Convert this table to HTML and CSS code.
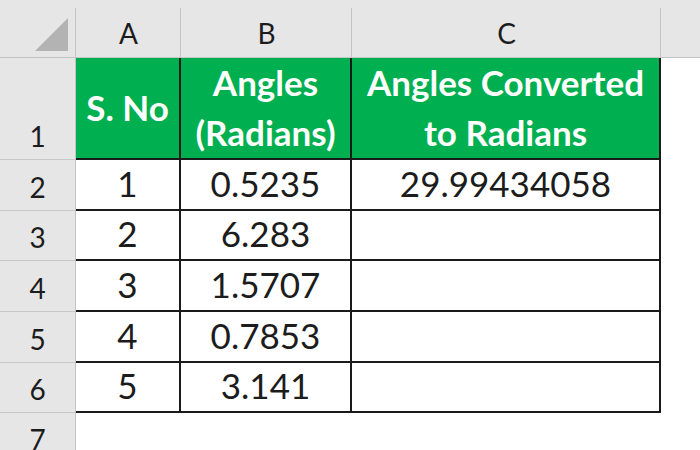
FILE: index.html
```html
<!DOCTYPE html>
<html>
<head>
<meta charset="utf-8">
<link rel="stylesheet" href="styles.css">
</head>
<body>
<div class="sheet">
  <div class="ch corner"><svg class="tri" width="34" height="34" viewBox="0 0 34 34"><polygon points="0,33 33,0 33,33" fill="#b3b3b3"/></svg></div>
  <div class="ch">A</div>
  <div class="ch">B</div>
  <div class="ch">C</div>
  <div class="ch last"></div>

  <div class="rh r1">1</div>
  <div class="hd">S. No</div>
  <div class="hd">Angles<br>(Radians)</div>
  <div class="hd">Angles Converted<br>to Radians</div>
  <div class="blank"></div>

  <div class="rh">2</div>
  <div class="cell">1</div>
  <div class="cell">0.5235</div>
  <div class="cell">29.99434058</div>
  <div class="blank"></div>

  <div class="rh">3</div>
  <div class="cell">2</div>
  <div class="cell">6.283</div>
  <div class="cell"></div>
  <div class="blank"></div>

  <div class="rh">4</div>
  <div class="cell">3</div>
  <div class="cell">1.5707</div>
  <div class="cell"></div>
  <div class="blank"></div>

  <div class="rh">5</div>
  <div class="cell">4</div>
  <div class="cell">0.7853</div>
  <div class="cell"></div>
  <div class="blank"></div>

  <div class="rh">6</div>
  <div class="cell">5</div>
  <div class="cell">3.141</div>
  <div class="cell"></div>
  <div class="blank"></div>

  <div class="rh">7</div>
  <div class="blank"></div>
  <div class="blank"></div>
  <div class="blank"></div>
  <div class="blank"></div>
</div>
</body>
</html>
```
FILE: styles.css
```css
html, body {
  margin: 0;
  padding: 0;
  background: #ffffff;
}
body {
  width: 700px;
  height: 450px;
  overflow: hidden;
  font-family: Lato, "Open Sans", sans-serif;
  color: #1c1c1c;
}
.sheet {
  display: grid;
  grid-template-columns: 76px 105px 171px 309px 1fr;
  grid-template-rows: 58px 102px 51px 50px 51px 51px 50px 50px;
  width: 700px;
}
.ch {
  background-color: #e6e6e6;
  background-image: linear-gradient(#c4c4c4, #c4c4c4), linear-gradient(#c4c4c4, #c4c4c4);
  background-size: 1px 50px, 100% 1px;
  background-position: right bottom, left bottom;
  background-repeat: no-repeat;
  display: flex;
  align-items: center;
  justify-content: center;
  padding-top: 8px;
  box-sizing: border-box;
  font-size: 28px;
  line-height: 1;
}
.ch.last {
  background-image: linear-gradient(#c4c4c4, #c4c4c4);
  background-size: 100% 1px;
  background-position: left bottom;
}
.corner {
  justify-content: flex-start;
  align-items: flex-start;
  padding: 18px 0 0 35px;
}
.tri {
  display: block;
}
.rh {
  background-color: #e6e6e6;
  border-right: 1px solid #c4c4c4;
  border-bottom: 1px solid #c8c8c8;
  box-sizing: border-box;
  display: flex;
  align-items: flex-end;
  justify-content: center;
  padding-bottom: 9px;
  font-size: 28px;
  line-height: 1;
}
.hd {
  background: #00b050;
  color: #ffffff;
  font-weight: 700;
  font-size: 35px;
  line-height: 50px;
  text-align: center;
  display: flex;
  align-items: center;
  justify-content: center;
  padding-bottom: 2px;
  border-right: 2px solid #1a1a1a;
  border-bottom: 2px solid #1a1a1a;
  box-sizing: border-box;
}
.cell {
  display: flex;
  align-items: flex-end;
  justify-content: center;
  padding-bottom: 8px;
  font-size: 35px;
  line-height: 1;
  border-right: 2px solid #1a1a1a;
  border-bottom: 2px solid #1a1a1a;
  box-sizing: border-box;
}
.blank {
  background: #ffffff;
}
```
